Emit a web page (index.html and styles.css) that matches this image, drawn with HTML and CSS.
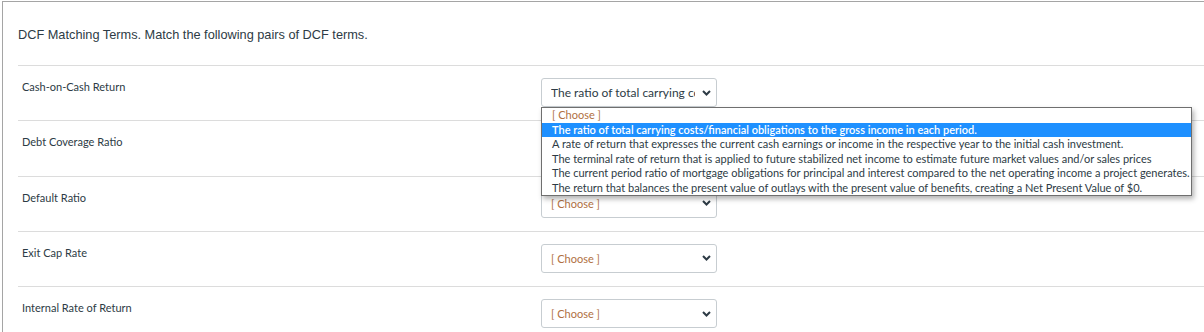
FILE: index.html
```html
<!DOCTYPE html>
<html lang="en">
<head>
  <meta charset="UTF-8">
  <meta name="viewport" content="width=device-width, initial-scale=1.0">
  <title>DCF Matching Terms</title>
  <link rel="stylesheet" href="styles.css">
</head>
<body>

  <div class="question">
    <div class="question-text">DCF Matching Terms. Match the following pairs of DCF terms.</div>

    <div class="answers">
      <!-- Row 1 with open dropdown -->
      <div class="answer-row">
        <div class="answer-label">Cash-on-Cash Return</div>
        <div class="select-wrap">
          <div class="select">
            <span class="select-value">The ratio of total carrying costs/financial obligations to the gross income in each period.</span>
            <svg class="chevron" width="9" height="6" viewBox="0 0 9 6"><path d="M1 1 L4.5 4.5 L8 1" fill="none" stroke="#2d3b45" stroke-width="2"/></svg>
          </div>
          <ul class="options">
            <li class="placeholder">[ Choose ]</li>
            <li class="selected">The ratio of total carrying costs/financial obligations to the gross income in each period.</li>
            <li>A rate of return that expresses the current cash earnings or income in the respective year to the initial cash investment.</li>
            <li>The terminal rate of return that is applied to future stabilized net income to estimate future market values and/or sales prices</li>
            <li>The current period ratio of mortgage obligations for principal and interest compared to the net operating income a project generates.</li>
            <li>The return that balances the present value of outlays with the present value of benefits, creating a Net Present Value of $0.</li>
          </ul>
        </div>
      </div>

      <div class="answer-row">
        <div class="answer-label">Debt Coverage Ratio</div>
        <div class="select-wrap">
          <div class="select">
            <span class="select-value placeholder">[ Choose ]</span>
            <svg class="chevron" width="9" height="6" viewBox="0 0 9 6"><path d="M1 1 L4.5 4.5 L8 1" fill="none" stroke="#2d3b45" stroke-width="2"/></svg>
          </div>
        </div>
      </div>

      <div class="answer-row">
        <div class="answer-label">Default Ratio</div>
        <div class="select-wrap">
          <div class="select">
            <span class="select-value placeholder">[ Choose ]</span>
            <svg class="chevron" width="9" height="6" viewBox="0 0 9 6"><path d="M1 1 L4.5 4.5 L8 1" fill="none" stroke="#2d3b45" stroke-width="2"/></svg>
          </div>
        </div>
      </div>

      <div class="answer-row">
        <div class="answer-label">Exit Cap Rate</div>
        <div class="select-wrap">
          <div class="select">
            <span class="select-value placeholder">[ Choose ]</span>
            <svg class="chevron" width="9" height="6" viewBox="0 0 9 6"><path d="M1 1 L4.5 4.5 L8 1" fill="none" stroke="#2d3b45" stroke-width="2"/></svg>
          </div>
        </div>
      </div>

      <div class="answer-row">
        <div class="answer-label">Internal Rate of Return</div>
        <div class="select-wrap">
          <div class="select">
            <span class="select-value placeholder">[ Choose ]</span>
            <svg class="chevron" width="9" height="6" viewBox="0 0 9 6"><path d="M1 1 L4.5 4.5 L8 1" fill="none" stroke="#2d3b45" stroke-width="2"/></svg>
          </div>
        </div>
      </div>
    </div>
  </div>

</body>
</html>
```

FILE: styles.css
```css
body {
  margin: 0;
  padding: 0;
  background-color: #fff;
  color: #2d3b45;
  font-family: Lato, "Noto Sans", sans-serif;
  overflow: hidden;
}

.question {
  margin: 1px 0 0 2px;
  border-top: 1px solid #a5a5a5;
  border-left: 1px solid #a5a5a5;
  padding-left: 15px;
  height: 331px;
  overflow: hidden;
}

.question-text {
  font-family: "Liberation Sans", Arial, sans-serif;
  font-size: 12.75px;
  line-height: 14px;
  padding: 26px 0 23px 0;
}

.answer-row {
  display: flex;
  border-top: 1px solid #dcdcdc;
  height: 54.3px;
}

.answer-label {
  width: 519px;
  padding: 14px 0 0 4px;
  font-size: 11px;
  line-height: 13px;
}

/* select box */
.select-wrap {
  position: relative;
  padding-top: 12px;
}

.select {
  display: flex;
  align-items: center;
  box-sizing: border-box;
  width: 176px;
  height: 29px;
  padding: 0 5px 0 9px;
  border: 1px solid #c7cdd1;
  border-radius: 3px;
  background-color: #fff;
  font-size: 11px;
}

.select-value {
  flex: 1;
  overflow: hidden;
  white-space: nowrap;
  margin-right: 7px;
  color: #2d3b45;
  font-size: 12px;
}

.select .placeholder {
  color: #b0703f;
  font-size: 11px;
}

.chevron {
  flex: none;
  display: block;
}

/* open dropdown list */
.options {
  position: absolute;
  top: 41px;
  left: 0;
  z-index: 2;
  box-sizing: border-box;
  width: 651px;
  margin: 0;
  padding: 0;
  list-style: none;
  background-color: #fff;
  border: 1px solid #6f6f6f;
  box-shadow: 2px 3px 5px rgba(0, 0, 0, 0.3);
  font-size: 11px;
}

.options li {
  height: 14.5px;
  line-height: 14px;
  padding-left: 10px;
  white-space: nowrap;
  color: #2d3b45;
}

.options li.placeholder {
  color: #b0703f;
}

.options li.selected {
  background-color: #1e90ff;
  color: #fff;
  font-weight: 600;
}
```
